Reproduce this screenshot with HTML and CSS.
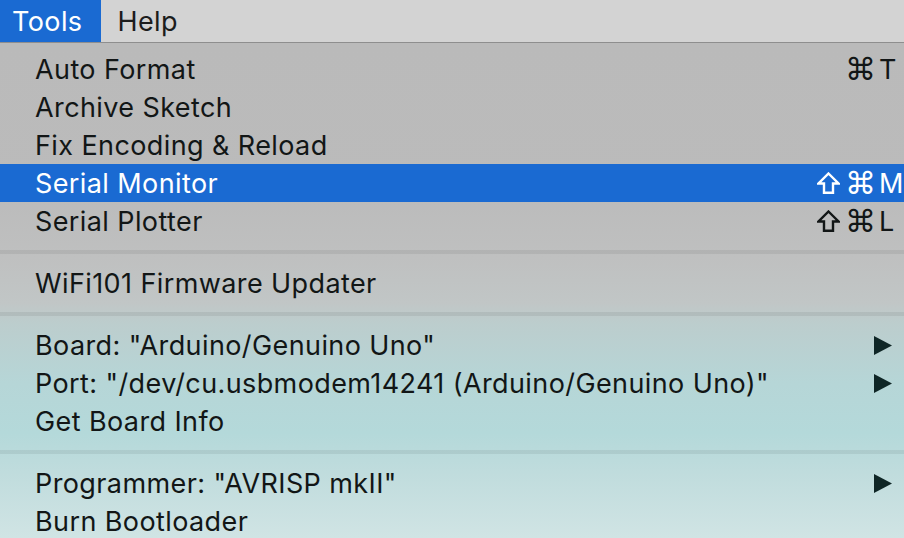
FILE: index.html
```html
<!DOCTYPE html>
<html>
<head>
<meta charset="utf-8">
<link rel="stylesheet" href="styles.css">
</head>
<body>
<div class="screen">
  <div class="menubar">
    <div class="mb-item active">Tools</div>
    <div class="mb-item">Help</div>
  </div>
  <div class="menu">
    <div class="row"><span class="label">Auto Format</span><span class="sc"><span class="mods"><span class="cmd">⌘</span></span><span class="key">T</span></span></div>
    <div class="row"><span class="label">Archive Sketch</span></div>
    <div class="row"><span class="label">Fix Encoding &amp; Reload</span></div>
    <div class="row selected"><span class="label">Serial Monitor</span><span class="sc"><span class="mods"><svg class="shift" viewBox="0 0 23 22"><polygon points="11.5,1.5 21.5,11.5 16,11.5 16,20.8 7,20.8 7,11.5 1.5,11.5"/></svg><span class="cmd">⌘</span></span><span class="key">M</span></span></div>
    <div class="row"><span class="label">Serial Plotter</span><span class="sc"><span class="mods"><svg class="shift" viewBox="0 0 23 22"><polygon points="11.5,1.5 21.5,11.5 16,11.5 16,20.8 7,20.8 7,11.5 1.5,11.5"/></svg><span class="cmd">⌘</span></span><span class="key">L</span></span></div>
    <div class="sep"></div>
    <div class="row"><span class="label">WiFi101 Firmware Updater</span></div>
    <div class="sep"></div>
    <div class="row"><span class="label">Board: "Arduino/Genuino Uno"</span><svg class="arrow" viewBox="0 0 18 19"><polygon points="0,0 18,9.5 0,19"/></svg></div>
    <div class="row"><span class="label">Port: "/dev/cu.usbmodem14241 (Arduino/Genuino Uno)"</span><svg class="arrow" viewBox="0 0 18 19"><polygon points="0,0 18,9.5 0,19"/></svg></div>
    <div class="row"><span class="label">Get Board Info</span></div>
    <div class="sep"></div>
    <div class="row"><span class="label">Programmer: "AVRISP mkII"</span><svg class="arrow" viewBox="0 0 18 19"><polygon points="0,0 18,9.5 0,19"/></svg></div>
    <div class="row"><span class="label">Burn Bootloader</span></div>
  </div>
</div>
</body>
</html>
```
FILE: styles.css
```css
html, body {
  margin: 0;
  padding: 0;
}
body {
  width: 904px;
  height: 538px;
  overflow: hidden;
  font-family: "Inter", "Liberation Sans", Arial, sans-serif;
  font-size: 27px;
  letter-spacing: 0.4px;
  color: #121616;
}
.screen {
  width: 904px;
  height: 538px;
  display: flex;
  flex-direction: column;
}
.menubar {
  height: 42px;
  background: #d3d3d3;
  border-bottom: 1px solid #8e8e8e;
  display: flex;
  align-items: stretch;
  flex: none;
}
.mb-item {
  display: flex;
  align-items: center;
  padding: 0 18px 0 17px;
  color: #1c1c1c;
}
.mb-item.active {
  background: #1a6ad2;
  color: #ffffff;
  padding: 0 18px 0 12px;
}
.menu {
  flex: 1;
  padding-top: 7px;
  background: linear-gradient(180deg, #bababa 0px, #bbbbbb 150px, #bfc0c0 215px, #c1c6c6 260px, #bccdcd 280px, #b6d6d7 340px, #b4d9da 390px, #c0dcdd 430px, #d0e4e4 495px);
}
.row {
  height: 38px;
  display: flex;
  align-items: center;
  padding-left: 35px;
  padding-right: 2px;
}
.row .label {
  flex: 1;
  white-space: nowrap;
}
.row.selected {
  background: #1a6ad2;
  color: #ffffff;
}
.sc {
  display: flex;
  align-items: center;
  letter-spacing: 0;
}
.mods {
  display: flex;
  align-items: center;
  gap: 5px;
}
.cmd {
  font-family: "DejaVu Sans", sans-serif;
  font-size: 31px;
  line-height: 1;
}
.shift {
  width: 23px;
  height: 22px;
  fill: none;
  stroke: currentColor;
  stroke-width: 2.4;
  stroke-linejoin: miter;
}
.key {
  width: 23px;
  padding-left: 3px;
  white-space: nowrap;
}
.arrow {
  width: 18px;
  height: 19px;
  margin-right: 10px;
  fill: #0f2626;
}
.sep {
  height: 24px;
  display: flex;
  align-items: center;
}
.sep::before {
  content: "";
  display: block;
  width: 100%;
  height: 4px;
  background: rgba(0, 0, 0, 0.065);
}
```
